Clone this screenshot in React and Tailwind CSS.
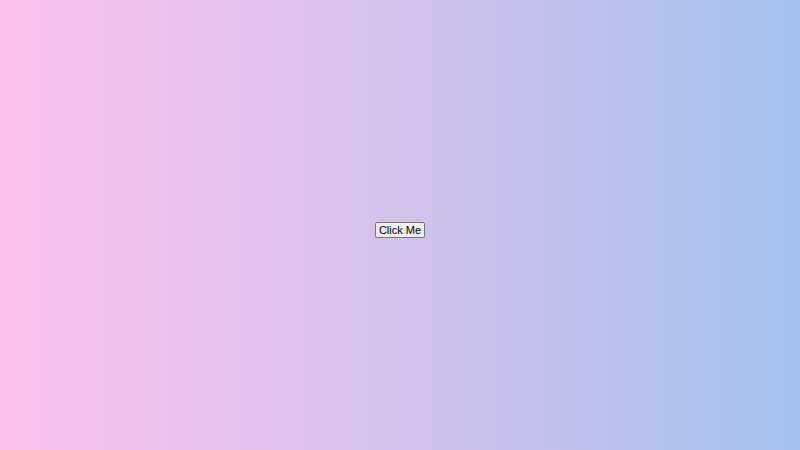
export default function App() {
  return (
    <div className="h-[450px] w-full pt-[10px] flex items-center justify-center bg-gradient-to-r from-[#fbc2eb] to-[#a6c1ee]">
      <button
        className="
          font-['Liberation_Sans',Arial,sans-serif]
          text-[11px]
          leading-[12px]
          text-black
          px-[3px]
          py-[1px]
          border
          border-[#767676]
          rounded-[2px]
          bg-[#efefef]
        "
      >
        Click Me
      </button>
    </div>
  );
}
